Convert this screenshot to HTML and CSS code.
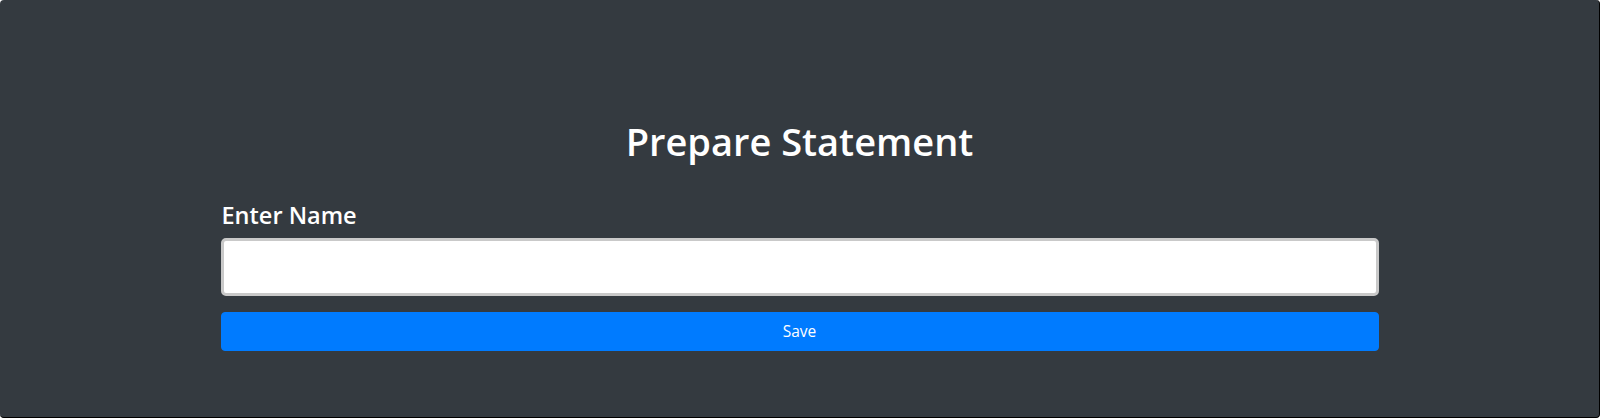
FILE: index.html
```html
<!DOCTYPE html>
<html lang="en">
<head>
    <meta charset="UTF-8">
    <meta name="viewport" content="width=device-width, initial-scale=1.0">
    <title>Prepare Statement</title>
    <link rel="stylesheet" href="styles.css">
</head>
<body>

    <div class="panel">
        <div class="form-wrap">
            <h1>Prepare Statement</h1>

            <!-- Name form -->
            <form id="name-form">
                <label for="name">Enter Name</label>
                <input type="text" id="name" name="name">
                <button type="submit">Save</button>
            </form>
        </div>
    </div>

</body>
</html>
```

FILE: styles.css
```css
* {
    box-sizing: border-box;
}

body {
    font-family: 'Open Sans', 'Noto Sans', sans-serif;
    background-color: #ffffff;
    margin: 0;
    padding: 0;
}

.panel {
    height: 418px;
    background-color: #343a40;
    border-radius: 4px;
    border-right: 1px solid #000000;
    border-bottom: 1px solid #000000;
    display: flex;
    justify-content: center;
}

.form-wrap {
    width: 1158px;
    padding-top: 119px;
}

h1 {
    font-size: 38px;
    font-weight: 600;
    line-height: 1.2;
    color: #ffffff;
    text-align: center;
    margin: 0 0 36px 0;
}

form {
    display: flex;
    flex-direction: column;
}

label {
    font-size: 23.5px;
    font-weight: 600;
    color: #ffffff;
    line-height: 1.2;
    padding-left: 1px;
    margin-bottom: 9px;
}

input {
    height: 58px;
    padding: 8px 16px;
    border: 3px solid #c9c9c9;
    border-radius: 5px;
    font-size: 20px;
    background-color: #ffffff;
    outline: none;
}

button {
    margin-top: 16px;
    height: 39px;
    padding: 6px 12px;
    background-color: #007bff;
    color: #ffffff;
    border: 1px solid #007bff;
    border-radius: 4px;
    font-family: inherit;
    font-size: 15.5px;
    cursor: pointer;
}

button:hover {
    background-color: #0069d9;
}
```
